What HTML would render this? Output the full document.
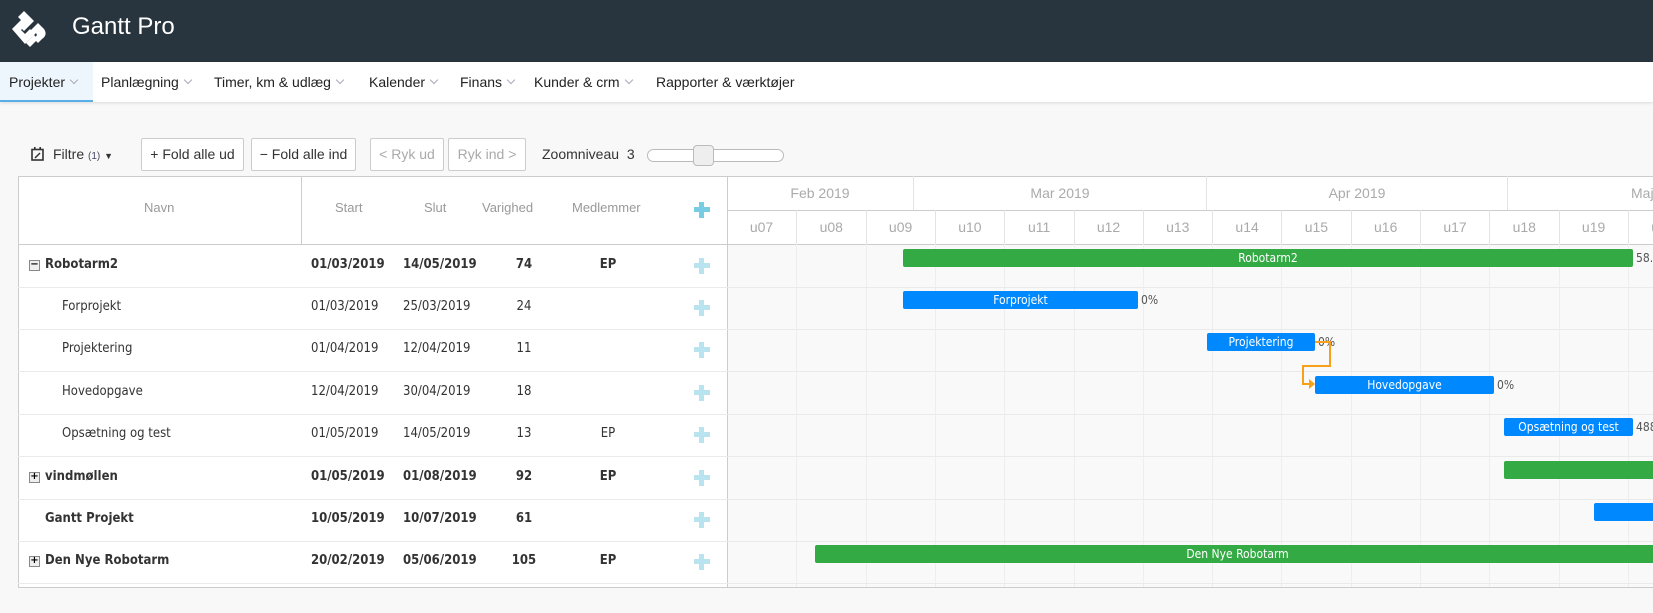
<!DOCTYPE html>
<html><head><meta charset="utf-8"><style>
*{box-sizing:border-box;margin:0;padding:0}
body{width:1653px;height:613px;overflow:hidden;background:#f8f8f8;font-family:"Liberation Sans",sans-serif;position:relative}
.a{position:absolute}
.top{left:0;top:0;width:1653px;height:62px;background:#29353e}
.nav{left:0;top:62px;width:1653px;height:40px;background:#fff;box-shadow:0 1px 3px rgba(0,0,0,.12)}
.ni{top:0;height:40px;line-height:40px;font-size:14px;color:#222;white-space:nowrap}
.ni i{display:inline-block;width:6px;height:6px;border-right:1px solid #aab;border-bottom:1px solid #aab;transform:rotate(45deg);margin:0 0 4px 6px}
.btn{top:138px;height:33px;line-height:31px;border:1px solid #ccc;background:#fff;border-radius:2px;font-size:14px;color:#333;text-align:center}
.dis{color:#aaa}
.tbl{left:18px;top:176px;width:1640px;height:412px;border:1px solid #ccc;border-right:none;background:#fff}
.hd{font-size:13px;color:#999;top:200px;white-space:nowrap}
.cell{font-family:"DejaVu Sans Condensed","DejaVu Sans",sans-serif;font-size:13px;color:#333;white-space:nowrap}
.b{font-weight:bold}
.plus{width:16px;height:16px}
.plus:before,.plus:after{content:"";position:absolute;background:#b9e4ef}
.plus:before{left:5px;top:0;width:5px;height:16px}
.plus:after{left:0;top:5px;width:16px;height:5px}
.ph:before,.ph:after{background:#79cde2}
.box{width:11px;height:11px;border:1px solid #888;background:#eee;font-size:10px;line-height:8px;text-align:center;color:#000;font-family:"DejaVu Sans",sans-serif;font-weight:bold}
.bar{height:18px;border-radius:2px;color:#fff;font-family:"DejaVu Sans Condensed","DejaVu Sans",sans-serif;font-size:12px;text-align:center;line-height:18px;white-space:nowrap;overflow:hidden}
.g{background:#34aa44}.bl{background:#0088ff}
.pct{font-family:"DejaVu Sans Condensed",sans-serif;font-size:12px;color:#555;white-space:nowrap}
.wk{top:210px;height:34px;line-height:34px;width:69px;text-align:center;color:#aaa;font-size:14px;border-left:1px solid #e3e3e3}
.mo{top:176px;height:34px;line-height:34px;text-align:center;color:#aaa;font-size:14px;border-left:1px solid #e3e3e3}
</style></head><body>
<div class="a top"></div>
<svg class="a" style="left:10px;top:9px" width="40" height="44" viewBox="0 0 40 44"><g fill="#fff"><path d="M14 2 L24 12 L14 22 L8 16 L12 12 L8 8Z"/><path d="M2 20 L12 10 L17 15 L11 21 L15 25 L20 20 L25 25 L15 35Z"/><path d="M20 22 L28 14 L34 20 Q38 26 32 30 L28 34 L24 30 L27 26 L26 24 L22 28 L18 24Z"/><path d="M16 34 L24 26 L28 30 L20 38Z"/></g></svg>
<div class="a" style="left:72px;top:13px;font-size:24px;color:#fff">Gantt Pro</div>
<div class="a nav"></div>
<div class="a" style="left:0;top:62px;width:93px;height:40px;background:#eef6fd;border-bottom:2px solid #5aaee8"></div>
<div class="a ni" style="left:9px;top:62px">Projekter<i></i></div>
<div class="a ni" style="left:101px;top:62px">Planlægning<i></i></div>
<div class="a ni" style="left:214px;top:62px">Timer, km &amp; udlæg<i></i></div>
<div class="a ni" style="left:369px;top:62px">Kalender<i></i></div>
<div class="a ni" style="left:460px;top:62px">Finans<i></i></div>
<div class="a ni" style="left:534px;top:62px">Kunder &amp; crm<i></i></div>
<div class="a ni" style="left:656px;top:62px">Rapporter &amp; værktøjer</div>

<svg class="a" style="left:31px;top:147px" width="13" height="14" viewBox="0 0 13 14"><rect x="1" y="2.5" width="11" height="10.5" fill="none" stroke="#333" stroke-width="1.6"/><rect x="3" y="0" width="1.6" height="3" fill="#333"/><rect x="8.4" y="0" width="1.6" height="3" fill="#333"/><path d="M4 11 L9 6" stroke="#333" stroke-width="1.5"/></svg>
<div class="a" style="left:53px;top:146px;font-size:14px;color:#333">Filtre <span style="font-size:10px;color:#446">(1)</span> <span style="font-size:9px">▼</span></div>
<div class="a btn" style="left:141px;width:103px">+ Fold alle ud</div>
<div class="a btn" style="left:251px;width:105px">− Fold alle ind</div>
<div class="a btn dis" style="left:370px;width:74px">&lt; Ryk ud</div>
<div class="a btn dis" style="left:448px;width:78px">Ryk ind &gt;</div>
<div class="a" style="left:542px;top:146px;font-size:14px;color:#333">Zoomniveau&nbsp; 3</div>
<div class="a" style="left:647px;top:149px;width:137px;height:13px;border:1px solid #bbb;border-radius:7px;background:#fff"></div>
<div class="a" style="left:693px;top:145px;width:21px;height:21px;border:1px solid #bbb;border-radius:4px;background:#eee"></div>

<div class="a tbl"></div>
<div class="a" style="left:727px;top:244px;width:926px;height:343px;background:#f9f9f9"></div>
<div class="a" style="left:301px;top:176px;width:1px;height:68px;background:#ccc"></div>
<div class="a" style="left:727px;top:176px;width:1px;height:411px;background:#ccc"></div>
<div class="a" style="left:18px;top:244px;width:1635px;height:1px;background:#ccc"></div>
<div class="a" style="left:727px;top:210px;width:926px;height:1px;background:#ccc"></div>

<div class="a hd" style="left:144px">Navn</div>
<div class="a hd" style="left:335px">Start</div>
<div class="a hd" style="left:424px">Slut</div>
<div class="a hd" style="left:482px">Varighed</div>
<div class="a hd" style="left:572px">Medlemmer</div>
<div class="a plus ph" style="left:694px;top:202px"></div>

<div class="a mo" style="left:727px;width:186px;border-left:none">Feb 2019</div>
<div class="a mo" style="left:913px;width:293px">Mar 2019</div>
<div class="a mo" style="left:1206px;width:301px">Apr 2019</div>
<div class="a mo" style="left:1507px;width:260px;text-align:left;padding-left:123px">Maj</div>

<div id="wk"></div>
<div id="rows"></div>

<svg class="a" style="left:1300px;top:335px" width="40" height="60"><path d="M15 7 H30 V31 H3 V49 H10" fill="none" stroke="#f7a11a" stroke-width="2"/><path d="M9 44 L15 49 L9 54Z" fill="#f7a11a"/></svg>

<script>
var wk=["u07","u08","u09","u10","u11","u12","u13","u14","u15","u16","u17","u18","u19","u20"],h="";
for(var i=0;i<wk.length;i++){var x=727+i*69.3;h+='<div class="a wk" style="left:'+x+'px;'+(i==0?'border-left:none':'')+'">'+wk[i]+'</div>';
 if(i>0)h+='<div class="a" style="left:'+x+'px;top:244px;width:1px;height:343px;background:#eee"></div>';}
document.getElementById("wk").innerHTML=h;
var R=[["Robotarm2","01/03/2019","14/05/2019","74","EP",1,"-"],["Forprojekt","01/03/2019","25/03/2019","24","",0],["Projektering","01/04/2019","12/04/2019","11","",0],["Hovedopgave","12/04/2019","30/04/2019","18","",0],["Opsætning og test","01/05/2019","14/05/2019","13","EP",0],["vindmøllen","01/05/2019","01/08/2019","92","EP",1,"+"],["Gantt Projekt","10/05/2019","10/07/2019","61","",1,""],["Den Nye Robotarm","20/02/2019","05/06/2019","105","EP",1,"+"]];
var B=[[903,1633,"g","Robotarm2","58."],[903,1138,"bl","Forprojekt","0%"],[1207,1315,"bl","Projektering","0%"],[1315,1494,"bl","Hovedopgave","0%"],[1504,1633,"bl","Opsætning og test","488"],[1504,1660,"g","",""],[1594,1660,"bl","",""],[815,1660,"g","Den Nye Robotarm",""]];
h="";
for(var i=0;i<8;i++){var t=244.6+i*42.4,r=R[i],c=r[5]?" b":"",ty=t+12;
 h+='<div class="a" style="left:18px;top:'+(t+42)+'px;width:1635px;height:1px;background:#eaeaea"></div>';
 if(r[6]=="-"||r[6]=="+")h+='<div class="a box" style="left:29px;top:'+(ty+3)+'px">'+(r[6]=="-"?"−":"+")+'</div>';
 h+='<div class="a cell'+c+'" style="left:'+(r[5]?45:62)+'px;top:'+ty+'px">'+r[0]+'</div>';
 h+='<div class="a cell'+c+'" style="left:311px;top:'+ty+'px">'+r[1]+'</div>';
 h+='<div class="a cell'+c+'" style="left:403px;top:'+ty+'px">'+r[2]+'</div>';
 h+='<div class="a cell'+c+'" style="left:504px;width:40px;text-align:center;top:'+ty+'px">'+r[3]+'</div>';
 h+='<div class="a cell'+c+'" style="left:588px;width:40px;text-align:center;top:'+ty+'px">'+r[4]+'</div>';
 h+='<div class="a plus" style="left:694px;top:'+(t+13)+'px"></div>';
 var b=B[i];h+='<div class="a bar '+b[2]+'" style="left:'+b[0]+'px;width:'+(b[1]-b[0])+'px;top:'+(t+4)+'px">'+b[3]+'</div>';
 if(b[4])h+='<div class="a pct" style="left:'+(b[1]+3)+'px;top:'+(t+6)+'px">'+b[4]+'</div>';}
document.getElementById("rows").innerHTML=h;
</script>
</body></html>
